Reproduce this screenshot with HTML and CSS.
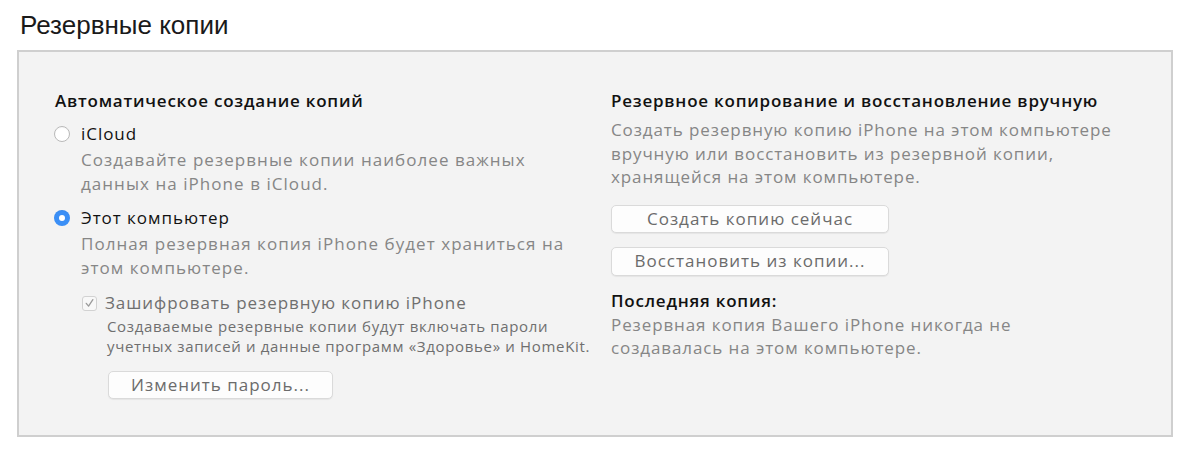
FILE: index.html
```html
<!DOCTYPE html>
<html lang="ru">
<head>
<meta charset="utf-8">
<link rel="stylesheet" href="styles.css">
</head>
<body>
<h1 class="title">Резервные копии</h1>
<div class="panel">
  <div class="col col-left">
    <div class="heading">Автоматическое создание копий</div>
    <div class="radio-row r1">
      <span class="radio"></span>
      <span class="label">iCloud</span>
    </div>
    <div class="desc">Создавайте резервные копии наиболее важных<br>данных на iPhone в iCloud.</div>
    <div class="radio-row r2">
      <span class="radio on"><span class="dot"></span></span>
      <span class="label">Этот компьютер</span>
    </div>
    <div class="desc">Полная резервная копия iPhone будет храниться на<br>этом компьютере.</div>
    <div class="check-row">
      <span class="check"><svg width="14" height="14" viewBox="0 0 14 14"><path d="M3.5 7.4 L6 10.4 L10.6 3.4" fill="none" stroke="#9a9a9a" stroke-width="1.4" stroke-linecap="round" stroke-linejoin="round"/></svg></span>
      <span class="check-label">Зашифровать резервную копию iPhone</span>
    </div>
    <div class="small-desc">Создаваемые резервные копии будут включать пароли<br>учетных записей и данные программ «Здоровье» и HomeKit.</div>
    <div class="btn btn-pass">Изменить пароль...</div>
  </div>
  <div class="col col-right">
    <div class="heading">Резервное копирование и восстановление вручную</div>
    <div class="desc desc-r">Создать резервную копию iPhone на этом компьютере<br>вручную или восстановить из резервной копии,<br>хранящейся на этом компьютере.</div>
    <div class="btn btn-r b1">Создать копию сейчас</div>
    <div class="btn btn-r b2">Восстановить из копии...</div>
    <div class="heading last">Последняя копия:</div>
    <div class="desc desc-r2">Резервная копия Вашего iPhone никогда не<br>создавалась на этом компьютере.</div>
  </div>
</div>
</body>
</html>
```
FILE: styles.css
```css
html, body {
  margin: 0;
  padding: 0;
  background: #ffffff;
}
body {
  font-family: "Open Sans", "Liberation Sans", Arial, sans-serif;
  color: #1c1c1c;
  width: 1200px;
  height: 458px;
  overflow: hidden;
}
.title {
  margin: 0;
  padding: 7px 0 0 20px;
  height: 50px;
  box-sizing: border-box;
  font-family: "Liberation Sans", Arial, sans-serif;
  font-size: 26px;
  font-weight: 400;
  line-height: 36px;
  color: #1a1a1a;
}
.panel {
  margin-left: 17px;
  width: 1156px;
  height: 387px;
  box-sizing: border-box;
  border: 2px solid #cfcfcf;
  background: #f3f3f3;
  display: flex;
  padding-top: 37px;
}
.col {
  display: flex;
  flex-direction: column;
}
.col-left {
  width: 556px;
  padding-left: 36px;
}
.col-right {
  padding-left: 0;
}
.heading {
  font-size: 17px;
  font-weight: 600;
  line-height: 24px;
  letter-spacing: 0.78px;
  color: #111;
  white-space: nowrap;
}
.radio-row {
  display: flex;
  align-items: center;
  height: 24px;
  margin-left: -1px;
}
.r1 { margin-top: 9px; }
.r2 { margin-top: 10px; }
.radio {
  width: 16px;
  height: 16px;
  box-sizing: border-box;
  border-radius: 50%;
  border: 1px solid #b9b9b9;
  background: #fff;
  margin-right: 11px;
  display: flex;
  align-items: center;
  justify-content: center;
  box-shadow: inset 0 1px 1px rgba(0,0,0,0.04);
}
.radio.on {
  border: none;
  background: #3b8ff6;
}
.dot {
  width: 6px;
  height: 6px;
  border-radius: 50%;
  background: #fff;
}
.label {
  font-size: 17px;
  line-height: 24px;
  letter-spacing: 0.95px;
  color: #111;
}
.desc {
  font-size: 17px;
  line-height: 24px;
  letter-spacing: 1.05px;
  color: #868686;
  padding-left: 26px;
  margin-top: 2px;
  white-space: nowrap;
}
.check-row {
  display: flex;
  align-items: center;
  height: 24px;
  margin-top: 11px;
  padding-left: 27px;
}
.check {
  width: 15px;
  height: 15px;
  box-sizing: border-box;
  border: 1px solid #d2d2d2;
  border-radius: 3px;
  background: #f8f8f8;
  display: flex;
  align-items: center;
  justify-content: center;
  margin-right: 8px;
}
.check svg { display: block; }
.check-label {
  font-size: 17px;
  line-height: 24px;
  letter-spacing: 0.95px;
  color: #6f6f6f;
}
.small-desc {
  font-size: 15px;
  line-height: 20px;
  letter-spacing: 0.67px;
  color: #6f6f6f;
  padding-left: 52px;
  margin-top: 1px;
  white-space: nowrap;
}
.btn {
  box-sizing: border-box;
  height: 28px;
  border: 1px solid #dadada;
  border-radius: 5px;
  background: #fdfdfd;
  box-shadow: 0 1px 1px rgba(0,0,0,0.06);
  font-size: 17px;
  line-height: 26px;
  letter-spacing: 1px;
  color: #6b6b6b;
  text-align: center;
}
.btn-pass {
  width: 225px;
  margin-left: 53px;
  margin-top: 15px;
}
.btn-r {
  width: 278px;
}
.desc-r {
  padding-left: 0;
  margin-top: 5px;
  line-height: 23.5px;
  letter-spacing: 0.9px;
}
.b1 { margin-top: 16px; }
.b2 { margin-top: 14px; height: 29px; }
.last { margin-top: 13px; }
.desc-r2 {
  padding-left: 0;
  margin-top: 0;
  line-height: 23px;
  letter-spacing: 0.9px;
}
```
